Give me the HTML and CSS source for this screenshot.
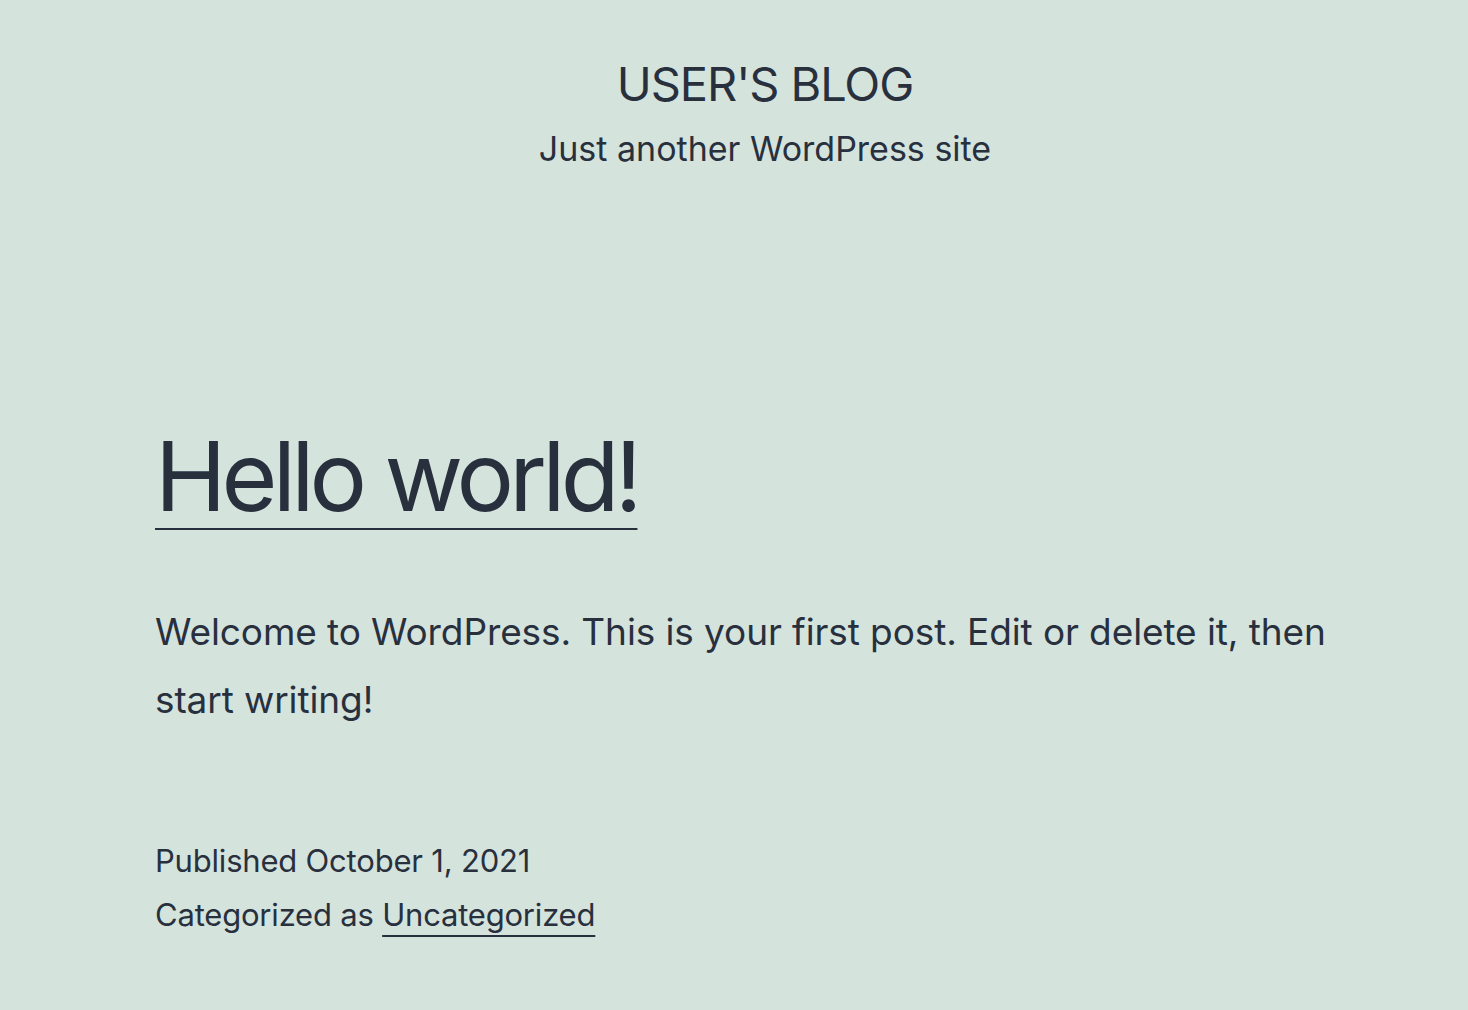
FILE: index.html
```html
<!DOCTYPE html>
<html lang="en">
<head>
<meta charset="utf-8">
<title>USER'S BLOG – Just another WordPress site</title>
<link rel="stylesheet" href="styles.css">
</head>
<body>
<div class="site">
  <header class="site-header">
    <p class="site-title">USER'S BLOG</p>
    <p class="site-description">Just another WordPress site</p>
  </header>
  <main class="site-main">
    <article class="post">
      <h1 class="entry-title"><a href="#">Hello world!</a></h1>
      <div class="entry-content">
        <p>Welcome to WordPress. This is your first post. Edit or delete it, then start writing!</p>
      </div>
      <footer class="entry-footer">
        <p class="posted-on">Published October 1, 2021</p>
        <p class="cat-links">Categorized as <a href="#">Uncategorized</a></p>
      </footer>
    </article>
  </main>
</div>
</body>
</html>
```
FILE: styles.css
```css
html, body {
  margin: 0;
  padding: 0;
}
body {
  background: #d5e3dd;
  color: #28303d;
  font-family: Inter, "Noto Sans", "Liberation Sans", sans-serif;
}
a {
  color: #28303d;
}
p, h1 {
  margin: 0;
}
.site {
  width: 1220px;
  margin: 0 0 0 155px;
}
.site-header {
  text-align: center;
  padding-top: 56px;
}
.site-title {
  font-size: 47px;
  line-height: 1.2;
  font-weight: 400;
  letter-spacing: -1.05px;
}
.site-description {
  font-size: 34px;
  line-height: 1.2;
  margin-top: 17px;
}
.site-main {
  padding-top: 249px;
}
.entry-title {
  font-size: 96px;
  line-height: 1.2;
  font-weight: 400;
  letter-spacing: -4.8px;
}
.entry-title a {
  text-decoration: underline;
  text-decoration-thickness: 2px;
  text-underline-offset: 17px;
}
.entry-content {
  margin-top: 64px;
  font-size: 37px;
  line-height: 68px;
  letter-spacing: -0.1px;
}
.entry-footer {
  margin-top: 100px;
  font-size: 31px;
  line-height: 54px;
  letter-spacing: -0.2px;
}
.cat-links a {
  text-decoration: underline;
  text-decoration-thickness: 2px;
  text-underline-offset: 9px;
}
```
